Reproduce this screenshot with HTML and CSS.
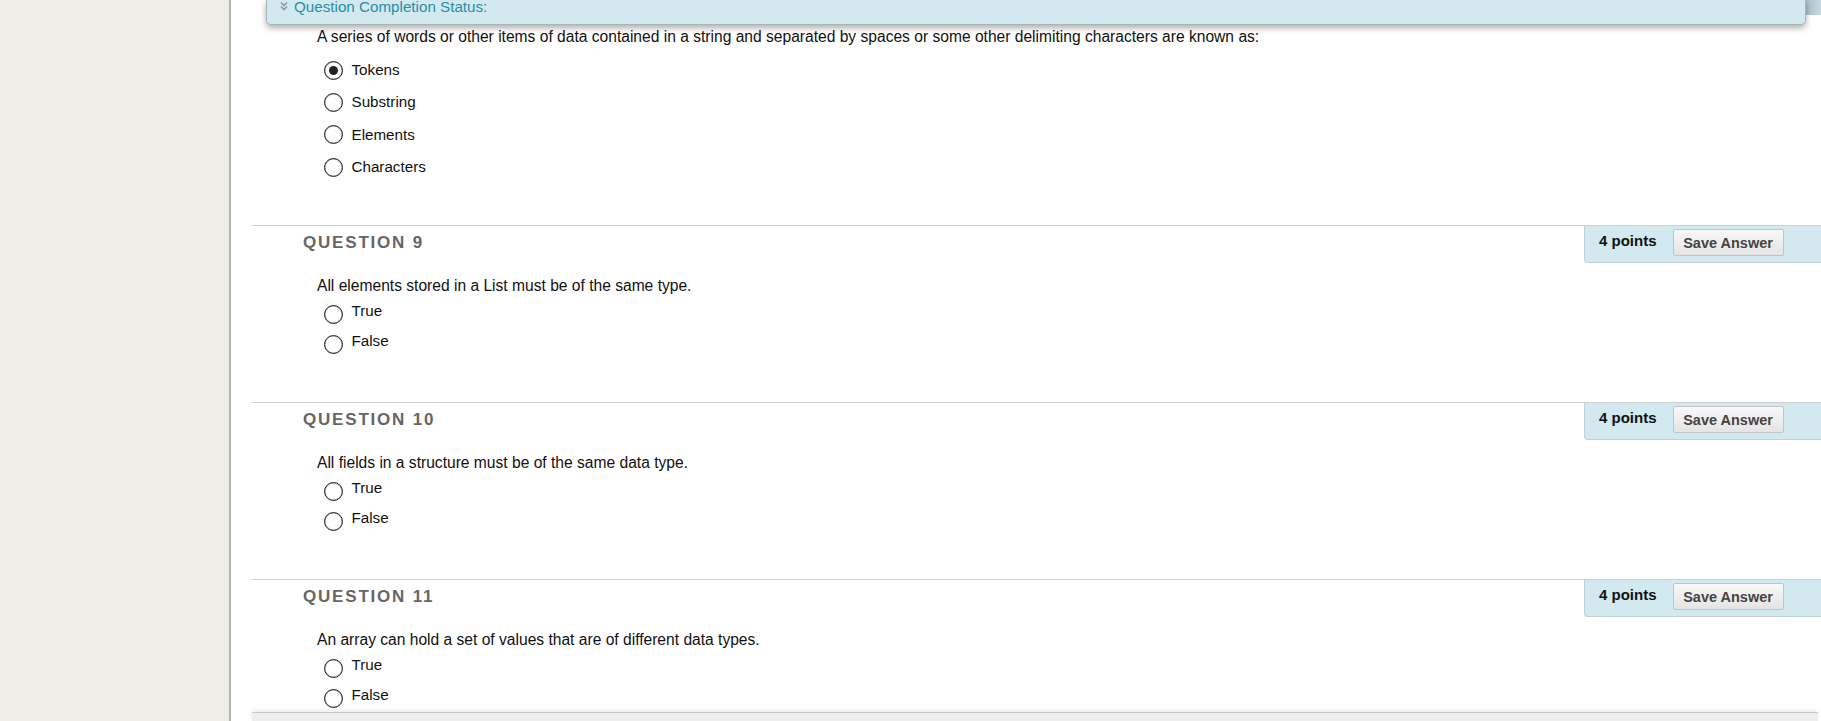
FILE: index.html
```html
<!DOCTYPE html>
<html lang="en">
<head>
<meta charset="utf-8">
<title>Test</title>
<link rel="stylesheet" href="styles.css">
</head>
<body>
<div class="page">
  <aside class="sidebar"></aside>
  <main class="main">
    <section class="question q-first">
      <p class="q-text">A series of words or other items of data contained in a string and separated by spaces or some other delimiting characters are known as:</p>
      <ul class="options options-wide">
        <li class="option"><input type="radio" class="radio" name="q8" checked><span class="opt-label">Tokens</span></li>
        <li class="option"><input type="radio" class="radio" name="q8"><span class="opt-label">Substring</span></li>
        <li class="option"><input type="radio" class="radio" name="q8"><span class="opt-label">Elements</span></li>
        <li class="option"><input type="radio" class="radio" name="q8"><span class="opt-label">Characters</span></li>
      </ul>
    </section>

    <section class="question">
      <div class="q-head">
        <h2 class="q-title">QUESTION 9</h2>
        <div class="points-box"><span class="points">4 points</span><button class="save-btn">Save Answer</button></div>
      </div>
      <p class="q-text">All elements stored in a List must be of the same type.</p>
      <ul class="options">
        <li class="option"><input type="radio" class="radio" name="q9"><span class="opt-label">True</span></li>
        <li class="option"><input type="radio" class="radio" name="q9"><span class="opt-label">False</span></li>
      </ul>
    </section>

    <section class="question">
      <div class="q-head">
        <h2 class="q-title">QUESTION 10</h2>
        <div class="points-box"><span class="points">4 points</span><button class="save-btn">Save Answer</button></div>
      </div>
      <p class="q-text">All fields in a structure must be of the same data type.</p>
      <ul class="options">
        <li class="option"><input type="radio" class="radio" name="q10"><span class="opt-label">True</span></li>
        <li class="option"><input type="radio" class="radio" name="q10"><span class="opt-label">False</span></li>
      </ul>
    </section>

    <section class="question">
      <div class="q-head">
        <h2 class="q-title">QUESTION 11</h2>
        <div class="points-box"><span class="points">4 points</span><button class="save-btn">Save Answer</button></div>
      </div>
      <p class="q-text">An array can hold a set of values that are of different data types.</p>
      <ul class="options">
        <li class="option"><input type="radio" class="radio" name="q11"><span class="opt-label">True</span></li>
        <li class="option"><input type="radio" class="radio" name="q11"><span class="opt-label">False</span></li>
      </ul>
    </section>
  </main>

  <div class="status-edge"></div>
  <div class="status-bar">
    <svg class="chevron" width="8" height="10" viewBox="0 0 8 10" aria-hidden="true">
      <polyline points="1,1.5 4,4.5 7,1.5" fill="none" stroke="#8d9ba0" stroke-width="1.6"/>
      <polyline points="1,5.5 4,8.5 7,5.5" fill="none" stroke="#8d9ba0" stroke-width="1.6"/>
    </svg>
    <span class="status-text">Question Completion Status:</span>
  </div>
  <div class="footer-bar"></div>
</div>
</body>
</html>
```

FILE: styles.css
```css
html, body {
  margin: 0;
  padding: 0;
}

body {
  font-family: "Liberation Sans", Arial, sans-serif;
  color: #111;
  background: #fff;
}

.page {
  position: relative;
  display: flex;
  height: 721px;
  overflow: hidden;
}

.sidebar {
  flex: none;
  width: 229px;
  background: #efede6;
  border-right: 2px solid #b3b3b3;
}

.main {
  flex: 1;
  background: #fff;
  padding-left: 21px;
}

.question {
  border-top: 1px solid #cfcfcf;
  padding-bottom: 43px;
}

.q-first {
  border-top: none;
  padding-top: 27px;
  padding-bottom: 41.9px;
}

.q-head {
  display: flex;
  align-items: flex-start;
  height: 37px;
}

.q-title {
  margin: 6.5px 0 0 51px;
  font-size: 17px;
  line-height: 20px;
  font-weight: bold;
  letter-spacing: 1.8px;
  color: #666666;
}

.points-box {
  margin-left: auto;
  box-sizing: border-box;
  width: 237px;
  height: 37px;
  display: flex;
  align-items: flex-start;
  gap: 16px;
  padding-left: 14px;
  background: #d2e9ef;
  border-left: 1px solid #c2d0d4;
  border-bottom: 1px solid #c2d0d4;
  border-bottom-left-radius: 4px;
}

.points {
  margin-top: 6px;
  font-size: 15px;
  line-height: 18px;
  font-weight: bold;
  color: #111;
}

.save-btn {
  margin-top: 3px;
  box-sizing: border-box;
  width: 111px;
  height: 27px;
  padding: 0;
  font-family: "Liberation Sans", Arial, sans-serif;
  font-size: 14.5px;
  font-weight: bold;
  color: #444;
  background: linear-gradient(#f8f8f8, #e4e4e4);
  border: 1px solid #c4c4c4;
  border-radius: 2px;
}

.q-text {
  margin: 13px 0 0 65px;
  font-size: 15.6px;
  line-height: 20px;
  color: #111;
}

.q-first .q-text {
  margin-top: 0;
}

.options {
  list-style: none;
  margin: 3px 0 0 72px;
  padding: 0;
}

.options-wide {
  margin-top: 6.8px;
}

.option {
  display: flex;
  align-items: flex-start;
  height: 30px;
}

.options-wide .option {
  height: 32.33px;
}

.radio {
  appearance: none;
  -webkit-appearance: none;
  box-sizing: border-box;
  width: 19px;
  height: 19px;
  margin: 6px 0 0 0;
  border: 1px solid #222;
  box-shadow: inset 0 0 0 0.5px rgba(0, 0, 0, 0.45);
  border-radius: 50%;
  background: #fff;
  display: flex;
  align-items: center;
  justify-content: center;
  flex: none;
}

.options-wide .radio {
  margin-top: 7px;
}

.radio:checked::after {
  content: "";
  width: 9px;
  height: 9px;
  border-radius: 50%;
  background: #222;
}

.opt-label {
  margin: 1.5px 0 0 8.5px;
  font-size: 15.2px;
  line-height: 20px;
  color: #111;
}

.options-wide .opt-label {
  margin-top: 6.2px;
}

.status-bar {
  position: absolute;
  top: 0;
  left: 266px;
  box-sizing: border-box;
  width: 1540px;
  height: 25px;
  display: flex;
  align-items: flex-start;
  padding-left: 13px;
  background: #d2e9ef;
  border: 1px solid #a8b6ba;
  border-top: none;
  border-radius: 0 0 5px 5px;
  box-shadow: 0 3px 6px rgba(0, 0, 0, 0.32);
}

.chevron {
  margin-top: 1px;
  flex: none;
}

.status-text {
  margin-left: 6px;
  font-size: 15.2px;
  line-height: 13px;
  color: #2b8ea7;
}

.status-edge {
  position: absolute;
  top: 0;
  right: 0;
  width: 16px;
  height: 15px;
  background: linear-gradient(90deg, #a9bfc6, #c6dadf);
}

.footer-bar {
  position: absolute;
  left: 252px;
  right: 3px;
  bottom: 0;
  height: 8px;
  background: #eeeeee;
  border-top: 1px solid #c8c8c8;
  box-shadow: 0 -2px 5px rgba(0, 0, 0, 0.08);
}
```
